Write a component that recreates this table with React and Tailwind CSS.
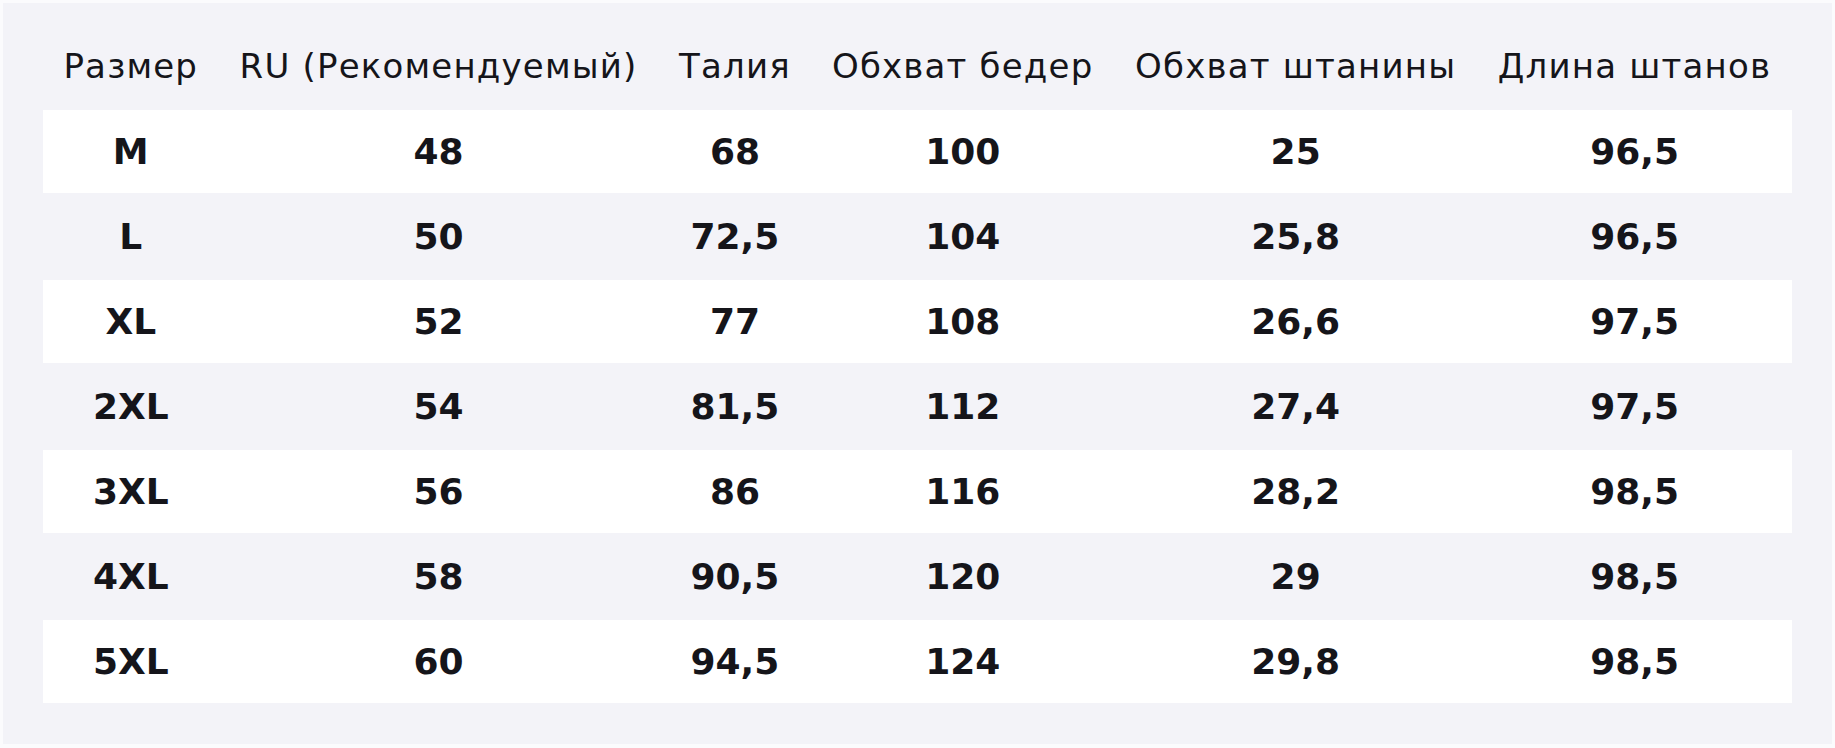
const headers = ['Размер', 'RU (Рекомендуемый)', 'Талия', 'Обхват бедер', 'Обхват штанины', 'Длина штанов'];

const rows = [
  ['M', '48', '68', '100', '25', '96,5'],
  ['L', '50', '72,5', '104', '25,8', '96,5'],
  ['XL', '52', '77', '108', '26,6', '97,5'],
  ['2XL', '54', '81,5', '112', '27,4', '97,5'],
  ['3XL', '56', '86', '116', '28,2', '98,5'],
  ['4XL', '58', '90,5', '120', '29', '98,5'],
  ['5XL', '60', '94,5', '124', '29,8', '98,5'],
];

export default function App() {
  return (
    <div className="w-[1835px] h-[748px] bg-[#fbfbfd] pt-[3px] pb-[4px] px-[3px] font-['DejaVu_Sans',sans-serif] text-[#15151a]">
      <div className="h-full bg-[#f3f3f8] px-[40px] pt-[20px]">
        <table className="w-full border-separate border-spacing-x-0 border-spacing-y-[2px]">
          <thead>
            <tr>
              {headers.map((h) => (
                <th key={h} className="h-[83px] px-[20px] text-center align-middle text-[34px] font-normal tracking-[0.035em] whitespace-nowrap">
                  {h}
                </th>
              ))}
            </tr>
          </thead>
          <tbody>
            {rows.map((r, i) => (
              <tr key={r[0]} className={i % 2 === 0 ? 'bg-white' : ''}>
                {r.map((c, j) => (
                  <td key={j} className="h-[83px] px-[20px] text-center align-middle text-[36px] font-bold">
                    {c}
                  </td>
                ))}
              </tr>
            ))}
          </tbody>
        </table>
      </div>
    </div>
  );
}
